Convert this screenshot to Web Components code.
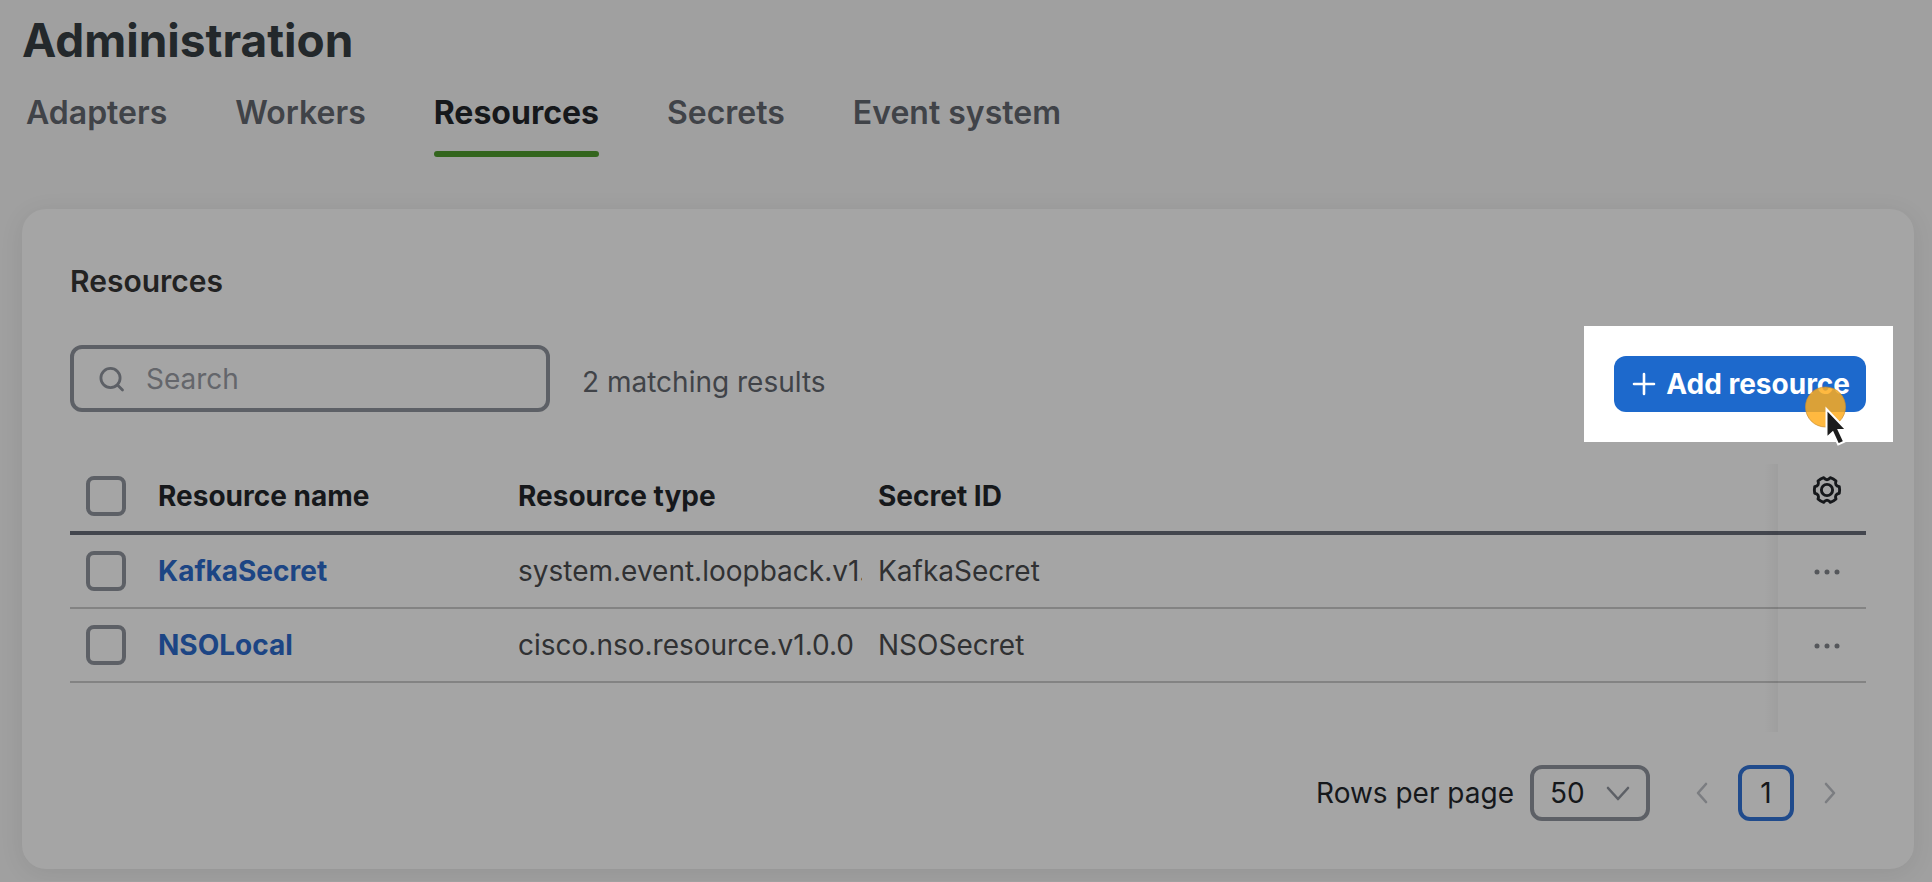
<!DOCTYPE html>
<html lang="en">
<head>
<meta charset="utf-8">
<meta name="viewport" content="width=device-width, initial-scale=1">
<title>Administration</title>
<style>
    :root {
        --page-bg: #a0a0a0;
        --card-bg: #a5a5a5;
        --heading: #23282b;
        --text-strong: #16181b;
        --text-color: #303133;
        --text-muted: #404348;
        --placeholder: #64666b;
        --control-border: #5d6066;
        --row-border: #838383;
        --head-border: #43464e;
        --link: #1c4584;
        --primary: #1d69cc;
        --active: #33651d;
        --large-gap: 48px;
    }
    body {
        background: var(--page-bg);
        color: var(--text-color);
        font: 400 28px/40px Inter, "Liberation Sans", sans-serif;
        margin: 0;
    }
</style>
</head>
<body>
<admin-page>
    <span slot="title">Administration</span>
    <nav-tabs slot="tabs">
        <nav-tab href="#adapters">Adapters</nav-tab>
        <nav-tab href="#workers">Workers</nav-tab>
        <nav-tab href="#resources" active>Resources</nav-tab>
        <nav-tab href="#secrets">Secrets</nav-tab>
        <nav-tab href="#events">Event system</nav-tab>
    </nav-tabs>
    <content-card>
        <span slot="title">Resources</span>
        <tool-bar>
            <search-field></search-field>
            <span>2 matching results</span>
            <spot-light slot="end"><add-button>Add resource</add-button></spot-light>
        </tool-bar>
        <resource-table></resource-table>
        <table-pager></table-pager>
    </content-card>
</admin-page>

<script>
(function () {
    function define(name, html, setup) {
        const $temp = document.createElement('template');
        $temp.innerHTML = html;

        customElements.define(name, class extends HTMLElement {
            constructor() {
                super();
                this.attachShadow({ mode: 'open' });
                this.shadowRoot.appendChild($temp.content.cloneNode(true));
            }

            connectedCallback() {
                if (setup) {
                    setup(this, this.shadowRoot);
                }
            }
        });
    }

    define('admin-page', `
    <style>
        :host {
            display: block;
            padding: 8px 18px 12px 22px;
        }
        h1 {
            color: var(--heading);
            font-size: 46px;
            font-weight: 700;
            line-height: 64px;
            margin: 0 0 21px;
        }
        main {
            margin-top: 52px;
        }
    </style>
    <h1><slot name="title"></slot></h1>
    <slot name="tabs"></slot>
    <main><slot></slot></main>
    `);

    define('nav-tabs', `
    <style>
        :host {
            display: block;
        }
        nav {
            display: flex;
            gap: 68px;
            padding-left: 4px;
        }
    </style>
    <nav aria-label="Administration"><slot></slot></nav>
    `);

    define('nav-tab', `
    <style>
        :host {
            display: block;
        }
        a {
            color: var(--text-muted);
            display: block;
            font-size: 32px;
            font-weight: 600;
            text-decoration: none;
        }
        a::after {
            border-radius: 3px;
            content: "";
            display: block;
            height: 6px;
            margin-top: 18px;
        }
        :host([active]) a {
            color: var(--text-strong);
            font-weight: 700;
        }
        :host([active]) a::after {
            background: var(--active);
        }
    </style>
    <a><slot></slot></a>
    `, ($tab, $root) => {
        const $link = $root.querySelector('a');

        $link.setAttribute('href', $tab.getAttribute('href'));
        if ($tab.hasAttribute('active')) {
            $link.setAttribute('aria-current', 'page');
        }
    });

    define('content-card', `
    <style>
        :host {
            background: var(--card-bg);
            border-radius: 24px;
            box-shadow: 0 4px 24px rgba(0, 0, 0, .08);
            display: block;
            padding: var(--large-gap);
        }
        h2 {
            color: #222;
            font-size: 30px;
            font-weight: 600;
            line-height: 48px;
            margin: 0 0 40px;
        }
    </style>
    <h2><slot name="title"></slot></h2>
    <slot></slot>
    `);

    define('tool-bar', `
    <style>
        :host {
            align-items: flex-end;
            color: var(--text-muted);
            display: flex;
            gap: 32px;
            line-height: 60px;
            margin-bottom: 52px;
        }
        .end {
            margin-left: auto;
        }
    </style>
    <slot></slot>
    <div class="end"><slot name="end"></slot></div>
    `);

    define('search-field', `
    <style>
        :host {
            display: block;
            min-width: 0;
            width: 480px;
        }
        label {
            align-items: center;
            border: 4px solid var(--control-border);
            border-radius: 12px;
            box-sizing: border-box;
            color: var(--control-border);
            display: flex;
            gap: 20px;
            height: 67px;
            padding: 0 24px;
        }
        svg {
            flex: none;
        }
        input {
            background: none;
            border: 0;
            color: var(--text-color);
            flex: 1;
            font: inherit;
            line-height: 40px;
            min-width: 0;
            outline: 0;
            padding: 0;
        }
        input::placeholder {
            color: var(--placeholder);
            opacity: 1;
        }
    </style>
    <label>
        <svg width="28" height="28" viewBox="0 0 28 28" fill="none" stroke="currentColor" stroke-width="2.8" stroke-linecap="round" aria-hidden="true">
            <circle cx="12.5" cy="13" r="9.6"/><path d="M19.500 20l5 5"/>
        </svg>
        <input type="search" placeholder="Search" aria-label="Search">
    </label>
    `);

    define('add-button', `
    <style>
        :host {
            display: block;
        }
        button {
            align-items: center;
            background: var(--primary);
            border: 0;
            border-radius: 12px;
            color: #fff;
            cursor: pointer;
            display: flex;
            font: inherit;
            font-weight: 700;
            gap: 8px;
            height: 56px;
            padding: 0 16px;
        }
    </style>
    <button type="button">
        <svg width="28" height="28" viewBox="0 0 28 28" stroke="currentColor" stroke-width="2.6" stroke-linecap="round" aria-hidden="true">
            <path d="M14 4v20M4 14h20"/>
        </svg>
        <slot></slot>
    </button>
    `);

    // Bright frame behind the slotted control, with the click marker over it
    define('spot-light', `
    <style>
        :host {
            display: block;
            isolation: isolate;
            position: relative;
        }
        :host::before {
            background: #fff;
            content: "";
            inset: -30px -27px -30px -30px;
            position: absolute;
            z-index: -1;
        }
        svg {
            bottom: -36px;
            pointer-events: none;
            position: absolute;
            right: 16px;
        }
    </style>
    <slot></slot>
    <svg width="48" height="64" viewBox="0 0 48 64" aria-hidden="true">
        <circle cx="23.5" cy="23" r="20" fill="#ffac1c" fill-opacity=".84" stroke="#c98f35" stroke-opacity=".7"/>
        <path d="M24.500 25v29l6.200-5.500 5.500 12 6-2.800-5.500-11.700h7.800z" fill="#1c1c1c" stroke="#fff" stroke-width="2"/>
    </svg>
    `);

    define('resource-table', `
    <style>
        :host {
            display: block;
            padding-bottom: 49px;
            position: relative;
        }
        /* edge of the pinned actions column */
        :host::after {
            background: linear-gradient(to left, rgba(0, 0, 0, .04), transparent);
            bottom: 0;
            content: "";
            pointer-events: none;
            position: absolute;
            right: 88px;
            top: 0;
            width: 14px;
        }
        table {
            border-collapse: separate;
            border-spacing: 0;
            table-layout: fixed;
            width: 100%;
        }
        th, td {
            border-bottom: 2px solid var(--row-border);
            box-sizing: border-box;
            height: 74px;
            overflow: hidden;
            padding: 0 0 0 16px;
            text-align: left;
            white-space: nowrap;
        }
        th {
            border-bottom: 4px solid var(--head-border);
            color: var(--text-strong);
            font-weight: 700;
            height: 71px;
            padding-bottom: 3px;
        }
        .check {
            width: 72px;
        }
        .col {
            width: 360px;
        }
        .actions {
            padding: 0 0 0 10px;
            text-align: center;
            width: 88px;
        }
        th.actions {
            vertical-align: top;
        }
        input {
            appearance: none;
            border: 4px solid var(--control-border);
            border-radius: 8px;
            box-sizing: border-box;
            display: block;
            height: 40px;
            margin: 0;
            width: 40px;
        }
        a {
            color: var(--link);
            font-weight: 700;
            text-decoration: none;
        }
        button {
            background: none;
            border: 0;
            color: #55575b;
            cursor: pointer;
            display: block;
            margin: 0 auto;
            padding: 10px 8px 8px;
        }
        th button {
            color: var(--text-strong);
        }
        svg {
            display: block;
        }
    </style>
    <table>
        <thead>
            <tr>
                <th class="check"><input type="checkbox" aria-label="Select all"></th>
                <th class="col" scope="col">Resource name</th>
                <th class="col" scope="col">Resource type</th>
                <th scope="col">Secret ID</th>
                <th class="actions">
                    <button type="button" aria-label="Table settings">
                        <svg width="32" height="32" viewBox="0 0 32 32" fill="none" stroke="currentColor" stroke-width="2.9" stroke-linejoin="round" aria-hidden="true">
                            <circle cx="16" cy="16" r="5.6"/>
                            <path d="M28.300 12.700Q29 16 28.300 19.300Q23.200 20.200 25 25Q22.500 27.400 19.300 28.300Q16 24.300 12.700 28.300Q9.500 27.400 7 25Q8.800 20.200 3.700 19.300Q3 16 3.700 12.700Q8.800 11.800 7 7Q9.500 4.600 12.700 3.700Q16 7.700 19.300 3.700Q22.500 4.600 25 7Q23.200 11.800 28.300 12.700Z"/>
                        </svg>
                    </button>
                </th>
            </tr>
        </thead>
        <tbody></tbody>
    </table>
    `, ($table, $root) => {
        const resources = [
            { name: 'KafkaSecret', type: 'system.event.loopback.v1.', secret: 'KafkaSecret' },
            { name: 'NSOLocal', type: 'cisco.nso.resource.v1.0.0', secret: 'NSOSecret' }
        ];

        $root.querySelector('tbody').innerHTML = resources.map(item => `
            <tr>
                <td class="check"><input type="checkbox" aria-label="Select ${item.name}"></td>
                <td><a href="#${item.name}">${item.name}</a></td>
                <td>${item.type}</td>
                <td>${item.secret}</td>
                <td class="actions">
                    <button type="button" aria-label="Actions for ${item.name}">
                        <svg width="28" height="8" viewBox="0 0 28 8" fill="currentColor" aria-hidden="true">
                            <circle cx="4" cy="4" r="2.500"/><circle cx="14" cy="4" r="2.500"/><circle cx="24" cy="4" r="2.500"/>
                        </svg>
                    </button>
                </td>
            </tr>`).join('');
    });

    define('table-pager', `
    <style>
        :host {
            align-items: center;
            color: var(--text-strong);
            display: flex;
            justify-content: flex-end;
            margin-top: 33px;
        }
        label {
            margin-right: 16px;
        }
        .select {
            align-items: center;
            display: grid;
            margin-right: 24px;
            width: 120px;
        }
        .select > * {
            grid-area: 1 / 1;
        }
        .select svg {
            color: var(--control-border);
            justify-self: end;
            margin-right: 20px;
            pointer-events: none;
        }
        select, button {
            background: none;
            border: 4px solid var(--control-border);
            border-radius: 12px;
            box-sizing: border-box;
            color: inherit;
            font: inherit;
            height: 56px;
            padding: 0;
        }
        select {
            appearance: none;
            padding-left: 16px;
            width: 100%;
        }
        button {
            border-color: #204b8c;
            width: 56px;
        }
        .step {
            align-items: center;
            border-color: transparent;
            color: #7b7d81;
            display: flex;
            justify-content: center;
        }
        nav {
            display: flex;
            gap: 8px;
            margin-right: 8px;
        }
        svg {
            fill: none;
            stroke: currentColor;
            stroke-linecap: round;
            stroke-linejoin: round;
            stroke-width: 2.600;
        }
    </style>
    <label for="rows">Rows per page</label>
    <div class="select">
        <select id="rows"><option>50</option></select>
        <svg width="24" height="16" viewBox="0 0 24 16" aria-hidden="true"><path d="M2 3l10 11L22 3"/></svg>
    </div>
    <nav aria-label="Pages">
        <button class="step" type="button" aria-label="Previous page" disabled>
            <svg width="12" height="22" viewBox="0 0 12 22" aria-hidden="true"><path d="M10 2L2 11l8 9"/></svg>
        </button>
        <button type="button" aria-current="page">1</button>
        <button class="step" type="button" aria-label="Next page" disabled>
            <svg width="12" height="22" viewBox="0 0 12 22" aria-hidden="true"><path d="M2 2l8 9-8 9"/></svg>
        </button>
    </nav>
    `);
})();
</script>
</body>
</html>
